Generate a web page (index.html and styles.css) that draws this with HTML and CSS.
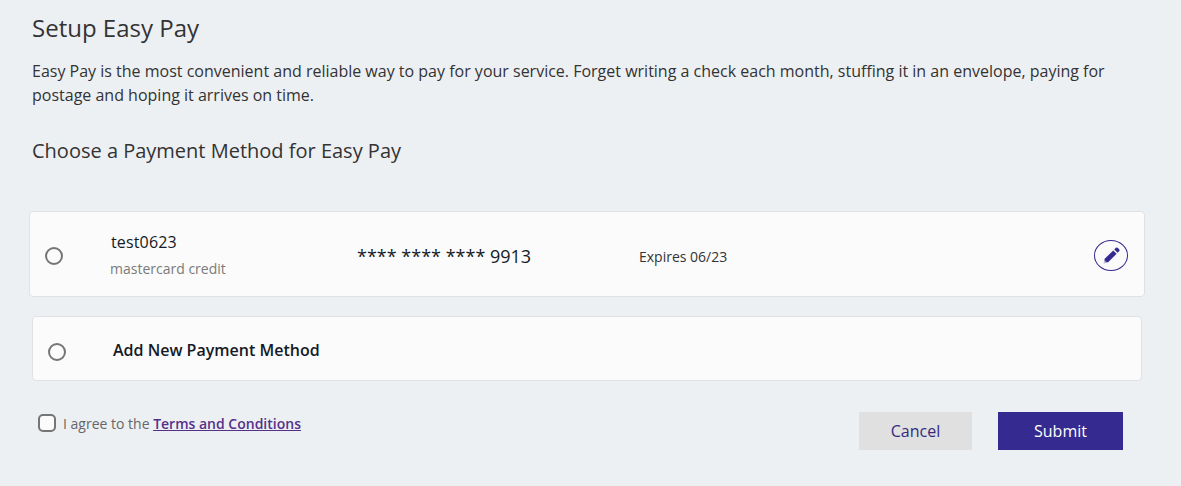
FILE: index.html
```html
<!DOCTYPE html>
<html lang="en">
<head>
    <meta charset="UTF-8">
    <meta name="viewport" content="width=device-width, initial-scale=1.0">
    <title>Setup Easy Pay</title>
    <link rel="stylesheet" href="styles.css">
</head>
<body>
<div class="container">
    <h1>Setup Easy Pay</h1>
    <p class="intro">Easy Pay is the most convenient and reliable way to pay for your service. Forget writing a check each month, stuffing it in an envelope, paying for postage and hoping it arrives on time.</p>
    <h2>Choose a Payment Method for Easy Pay</h2>

    <div class="method method-saved">
        <span class="radio"></span>
        <div class="method-name">
            <div class="name">test0623</div>
            <div class="type">mastercard credit</div>
        </div>
        <div class="number">**** **** **** 9913</div>
        <div class="expires">Expires 06/23</div>
        <button class="edit" aria-label="Edit">
            <svg width="17" height="17" viewBox="0 0 16 16">
                <path fill="#352a8f" d="M10.6 2.3l1.5-1.5a1.2 1.2 0 0 1 1.7 0l1.4 1.4a1.2 1.2 0 0 1 0 1.7l-1.5 1.5z"/>
                <path fill="#352a8f" d="M9.6 3.2l3.2 3.2-8 8-3.3.1-.1-3.1z"/>
                <path fill="#b4b1da" d="M1.2 12.2l2.6 2.6-3.3.7z"/>
            </svg>
        </button>
    </div>

    <div class="method method-new">
        <span class="radio"></span>
        <div class="add-label">Add New Payment Method</div>
    </div>

    <div class="footer">
        <label class="agree">
            <span class="checkbox"></span>
            <span class="agree-text">I agree to the <a href="#">Terms and Conditions</a></span>
        </label>
        <div class="actions">
            <button class="btn btn-cancel">Cancel</button>
            <button class="btn btn-submit">Submit</button>
        </div>
    </div>
</div>
</body>
</html>
```

FILE: styles.css
```css
body {
    font-family: "Open Sans", "Noto Sans", sans-serif;
    margin: 0;
    background-color: #edf0f3;
    color: #333;
}
.container {
    padding: 11px 39px 0 32px;
}
h1 {
    font-size: 24px;
    line-height: 33px;
    font-weight: 400;
    margin: 0;
}
.intro {
    font-size: 16px;
    line-height: 24px;
    margin: 15px 0 0;
}
h2 {
    font-size: 20px;
    line-height: 28px;
    font-weight: 400;
    margin: 30px 0 0;
}
.method {
    display: flex;
    align-items: center;
    box-sizing: border-box;
    background-color: #fbfbfb;
    border: 1px solid #dfe1e5;
    border-radius: 4px;
}
.method-saved {
    height: 86px;
    margin: 46px -3px 0;
    padding: 2px 15px 0;
}
.method-new {
    height: 65px;
    margin-top: 19px;
    padding: 6px 15px 0;
}
.radio {
    width: 14px;
    height: 14px;
    border: 2px solid #757575;
    border-radius: 50%;
    flex-shrink: 0;
}
.method-saved .radio {
    margin-top: 2px;
}
.method-name {
    width: 247px;
    margin-left: 47px;
}
.name {
    font-size: 16px;
    font-weight: 500;
    line-height: 22px;
    letter-spacing: 0.15px;
    color: #141a26;
    margin: -1px 0 0 1px;
}
.type {
    font-size: 14px;
    line-height: 20px;
    color: #7a7a7a;
    margin-top: 6px;
}
.number {
    width: 282px;
    font-size: 18px;
    color: #141a26;
    margin-top: 2px;
}
.expires {
    font-size: 14px;
    color: #333;
    margin-top: 2px;
}
.edit {
    width: 34px;
    height: 31px;
    margin-left: auto;
    margin-right: 1px;
    padding: 0;
    display: flex;
    align-items: center;
    justify-content: center;
    background: none;
    border: 1px solid #352a8f;
    border-radius: 50%;
}
.add-label {
    margin: -4px 0 0 47px;
    font-size: 16px;
    font-weight: 600;
    color: #141a26;
}
.footer {
    display: flex;
    justify-content: space-between;
    align-items: flex-start;
    margin-top: 31px;
}
.agree {
    display: flex;
    align-items: center;
    gap: 7px;
    margin-left: 6px;
    font-size: 14px;
    color: #666;
}
.agree-text {
    margin-top: 2px;
}
.checkbox {
    width: 14px;
    height: 14px;
    border: 2px solid #757575;
    border-radius: 5px;
    background-color: #fbfbfb;
}
.agree a {
    color: #553089;
    font-weight: 600;
}
.actions {
    display: flex;
    gap: 26px;
    margin-right: 19px;
}
.btn {
    height: 38px;
    border: none;
    font-family: inherit;
    font-size: 16px;
}
.btn-cancel {
    width: 113px;
    background-color: #e0e0e0;
    color: #352a7f;
}
.btn-submit {
    width: 125px;
    background-color: #352a8f;
    color: #fff;
}
```
